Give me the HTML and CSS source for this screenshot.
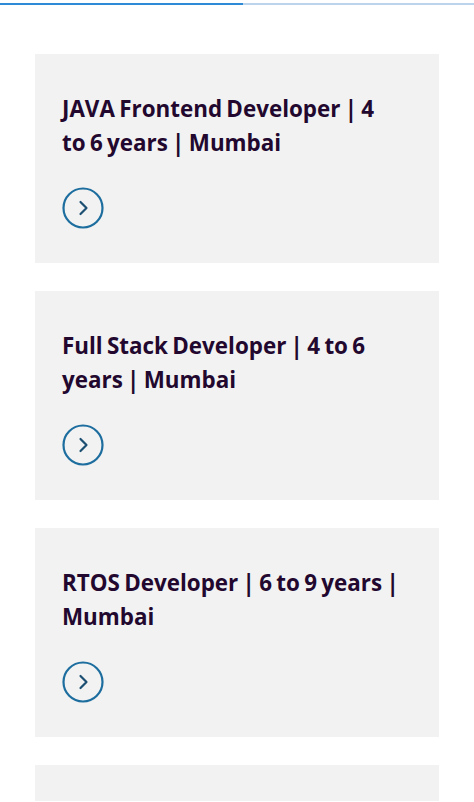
FILE: index.html
```html
<!DOCTYPE html>
<html lang="en">
<head>
<meta charset="utf-8">
<link rel="stylesheet" href="styles.css">
</head>
<body>
<div class="progress"><div class="progress-fill"></div></div>
<main class="list">
  <article class="card">
    <h3 class="title">JAVA Frontend Developer | 4 to 6 years | Mumbai</h3>
    <a class="more" href="#"><svg viewBox="0 0 42 42" width="42" height="42"><circle cx="21" cy="21" r="19.5" fill="none" stroke="#1d6e9f" stroke-width="2.2"/><path d="M18.5 15 L24.5 21 L18.5 27" fill="none" stroke="#1d4f73" stroke-width="2.2" stroke-linecap="round" stroke-linejoin="round"/></svg></a>
  </article>
  <article class="card">
    <h3 class="title">Full Stack Developer | 4 to 6 years | Mumbai</h3>
    <a class="more" href="#"><svg viewBox="0 0 42 42" width="42" height="42"><circle cx="21" cy="21" r="19.5" fill="none" stroke="#1d6e9f" stroke-width="2.2"/><path d="M18.5 15 L24.5 21 L18.5 27" fill="none" stroke="#1d4f73" stroke-width="2.2" stroke-linecap="round" stroke-linejoin="round"/></svg></a>
  </article>
  <article class="card">
    <h3 class="title">RTOS Developer | 6 to 9 years | Mumbai</h3>
    <a class="more" href="#"><svg viewBox="0 0 42 42" width="42" height="42"><circle cx="21" cy="21" r="19.5" fill="none" stroke="#1d6e9f" stroke-width="2.2"/><path d="M18.5 15 L24.5 21 L18.5 27" fill="none" stroke="#1d4f73" stroke-width="2.2" stroke-linecap="round" stroke-linejoin="round"/></svg></a>
  </article>
  <article class="card card-partial"></article>
</main>
</body>
</html>
```
FILE: styles.css
```css
html, body {
  margin: 0;
  padding: 0;
  background: #ffffff;
  overflow: hidden;
  height: 802px;
}
body {
  font-family: "Open Sans", "Noto Sans", sans-serif;
}
.progress {
  margin-top: 3px;
  height: 2px;
  background: #bcd5ec;
}
.progress-fill {
  width: 243px;
  height: 2px;
  background: #2f8ad6;
}
.list {
  display: flex;
  flex-direction: column;
  gap: 28px;
  padding: 49px 35px 0 35px;
}
.card {
  background: #f2f2f2;
  padding: 38px 27px 35px 27px;
  height: 209px;
  box-sizing: border-box;
  display: flex;
  flex-direction: column;
  align-items: flex-start;
}
.card-partial {
  height: 36px;
  padding: 0;
}
.title {
  margin: 0;
  font-size: 22.4px;
  line-height: 34px;
  font-weight: 700;
  word-spacing: -1.5px;
  color: #22082e;
  width: 337px;
}
.more {
  display: block;
  margin-top: 27px;
  width: 42px;
  height: 42px;
  margin-left: -0.5px;
}
.more svg {
  display: block;
}
```
